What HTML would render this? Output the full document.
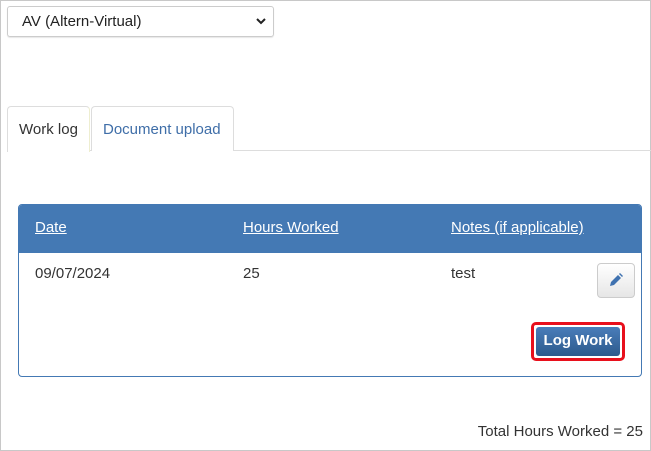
<!DOCTYPE html>
<html><head><style>
body{margin:0;width:651px;height:451px;overflow:hidden;background:#fff;font-family:"Liberation Sans",sans-serif;font-size:15px;color:#333;position:relative}
.frame{position:absolute;left:0;top:0;width:649px;height:449px;border:1px solid #c8c8c8}
.sel{position:absolute;left:7px;top:6px;width:265px;height:29px;border:1px solid #ccc;border-radius:3px;box-shadow:0 1px 1px rgba(0,0,0,.1)}
.sel span{position:absolute;left:14px;top:6px;color:#222}
.sel svg{position:absolute;right:7px;top:11px}
.tabline{position:absolute;left:7px;right:0;top:150px;border-top:1px solid #ddd}
.tab{position:absolute;top:106px;height:44px;border:1px solid #ddd;border-bottom:none;border-radius:4px 4px 0 0;background:#fff}
.t1{left:7px;width:81px;height:45px;z-index:2;border-right-color:#eeeed0}
.t2{left:91px;width:141px;color:#3f6ea8}
.tab span{position:absolute;top:14px;left:11px}
.panel{position:absolute;left:18px;top:204px;width:622px;height:171px;border:1px solid #4479b4;border-radius:4px;overflow:hidden}
.hd{position:absolute;left:0;top:0;width:100%;height:48px;background:#4479b4;color:#fff}
.hd a{position:absolute;top:14px;text-decoration:underline}
.cell{position:absolute;top:60px}
.edit{position:absolute;left:578px;top:58px;width:36px;height:33px;border:1px solid #ccc;border-radius:4px;background:linear-gradient(#fff,#e6e6e6)}
.edit svg{position:absolute;left:11px;top:9px}
.red{position:absolute;left:531px;top:322px;width:88px;height:33px;border:3px solid #e8101c;border-radius:5px}
.btn{position:absolute;left:2px;top:2px;width:84px;height:29px;background:linear-gradient(#4a7dba,#2d5a8c);border-radius:3px;color:#fff;font-weight:bold;text-align:center;line-height:28px}
.tot{position:absolute;right:8px;top:423px}
</style></head><body>
<div class="frame"></div>
<div class="sel"><span>AV (Altern-Virtual)</span><svg width="10" height="7" viewBox="0 0 10 7"><path d="M1 1l4 4 4-4" stroke="#222" stroke-width="2" fill="none"/></svg></div>
<div class="tabline"></div>
<div class="tab t1"><span>Work log</span></div>
<div class="tab t2"><span>Document upload</span></div>
<div class="panel">
<div class="hd"><a style="left:16px">Date</a><a style="left:224px">Hours Worked</a><a style="left:432px">Notes (if applicable)</a></div>
<div class="cell" style="left:16px">09/07/2024</div>
<div class="cell" style="left:224px">25</div>
<div class="cell" style="left:432px">test</div>
<div class="edit"><svg width="14" height="14" viewBox="0 0 14 14"><path d="M1 13l1-4 7-7 3 3-7 7z" fill="#3f72b0"/><path d="M10 1l1-1 3 3-1 1z" fill="#3f72b0"/></svg></div>
</div>
<div class="red"><div class="btn">Log Work</div></div>
<div class="tot">Total Hours Worked = 25</div>
</body></html>
